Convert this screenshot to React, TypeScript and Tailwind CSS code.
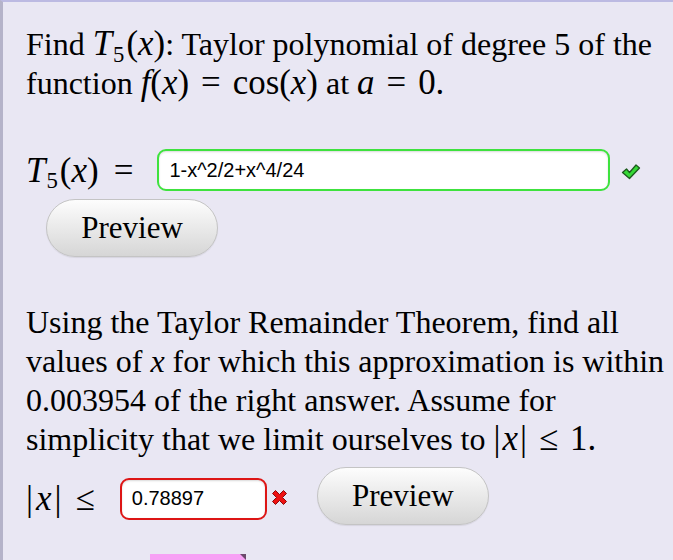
import React from "react";

// small check / cross marks used by the answer checker
function CheckMark() {
  return (
    <svg width="20" height="18" viewBox="0 0 20 18" className="block">
      <path
        d="M1.5 9.5 L5.5 6 L8.5 9.5 L15 2 L18.5 5 L8.5 15.5 Z"
        fill="#36d936"
        stroke="#1d5a1d"
        strokeWidth="1.3"
        strokeLinejoin="round"
      />
    </svg>
  );
}

function CrossMark() {
  return (
    <svg width="17" height="17" viewBox="0 0 17 17" className="block">
      <path
        d="M1.5 4.5 L4.5 1.5 L8.5 5.5 L12.5 1.5 L15.5 4.5 L11.5 8.5 L15.5 12.5 L12.5 15.5 L8.5 11.5 L4.5 15.5 L1.5 12.5 L5.5 8.5 Z"
        fill="#ee1111"
        stroke="#8a0a0a"
        strokeWidth="1"
        strokeLinejoin="round"
      />
    </svg>
  );
}

// math bits render a little larger than the body text, like MathJax does
function M({ children }: { children: React.ReactNode }) {
  return <span className="text-[1.09em] leading-none whitespace-nowrap">{children}</span>;
}

function Var({ children }: { children: React.ReactNode }) {
  return <span className="italic">{children}</span>;
}

function T5() {
  return (
    <>
      <Var>T</Var>
      <span className="text-[0.65em] relative top-[0.3em] ml-[1px] mr-[2px]">5</span>
      (<Var>x</Var>)
    </>
  );
}

function Eq() {
  return <span className="mx-[12px]">=</span>;
}

function PreviewButton() {
  return (
    <button className="w-[172px] h-[58px] rounded-full border border-[#c4c4c4] bg-linear-to-b from-[#fdfdfd] to-[#d6d6d6] text-[31px] shadow-[0_1px_1px_rgba(0,0,0,0.08)] font-['Liberation_Serif',serif] text-black">
      Preview
    </button>
  );
}

function App() {
  return (
    <div className="h-[560px] w-[673px] overflow-hidden bg-[#e9e7f3] border-t-2 border-l-[3px] border-t-[#bcbae2] border-l-[#b5b3c9] font-['Liberation_Serif',serif] text-black">
      <div className="pl-[23px] pt-[23px]">
        {/* ====== Question 1 ====== */}
        <p className="text-[32px] leading-[39px] whitespace-nowrap">
          Find{" "}
          <M>
            <T5 />
          </M>
          : Taylor polynomial of degree 5 of the
          <br />
          function{" "}
          <M>
            <Var>f</Var>(<Var>x</Var>)<Eq />cos(<Var>x</Var>)
          </M>{" "}
          at{" "}
          <M>
            <Var>a</Var>
            <Eq />0.
          </M>
        </p>

        <div className="mt-[46px] flex items-center h-[42px]">
          <span className="text-[35px] leading-none whitespace-nowrap">
            <T5 />
            <span className="ml-[15px]">=</span>
          </span>
          <input
            readOnly
            value="1-x^2/2+x^4/24"
            className="ml-[24px] w-[453px] h-[42px] rounded-[9px] border-2 border-[#3ee23e] bg-white px-[10px] text-[20px] font-['Liberation_Sans',sans-serif] text-black shadow-[inset_0_1px_2px_rgba(0,0,0,0.15)] outline-none"
          />
          <span className="ml-[11px] mt-[3px]">
            <CheckMark />
          </span>
        </div>

        <div className="mt-[8px] ml-[20px]">
          <PreviewButton />
        </div>

        {/* ====== Question 2 ====== */}
        <p className="mt-[46px] text-[32px] leading-[39px] whitespace-nowrap">
          Using the Taylor Remainder Theorem, find all
          <br />
          values of <Var>x</Var> for which this approximation is within
          <br />
          0.003954 of the right answer. Assume for
          <br />
          simplicity that we limit ourselves to{" "}
          <M>
            <span className="mr-[2px]">|</span>
            <Var>x</Var>
            <span className="ml-[2px]">|</span>
            <span className="mx-[12px]">≤</span>1.
          </M>
        </p>

        <div className="mt-[8px] flex items-center h-[58px]">
          <span className="text-[35px] leading-none whitespace-nowrap mt-[4px]">
            <span className="mr-[3px]">|</span>
            <Var>x</Var>
            <span className="ml-[3px]">|</span>
            <span className="ml-[14px]">≤</span>
          </span>
          <input
            readOnly
            value="0.78897"
            className="ml-[25px] mt-[5px] w-[147px] h-[42px] rounded-[9px] border-2 border-[#dd1515] bg-white px-[10px] text-[20px] font-['Liberation_Sans',sans-serif] text-black shadow-[inset_0_1px_2px_rgba(0,0,0,0.15)] outline-none"
          />
          <span className="ml-[4px] mt-[3px]">
            <CrossMark />
          </span>
          <span className="ml-[29px]">
            <PreviewButton />
          </span>
        </div>

        <div className="mt-[29px] ml-[124px] w-[96px] h-[20px] bg-[#f7a1f4] relative">
          <span className="absolute right-0 top-0 w-0 h-0 border-l-[6px] border-l-transparent border-t-[6px] border-t-[#6b4a6b]" />
        </div>
      </div>
    </div>
  );
}

export default App;
